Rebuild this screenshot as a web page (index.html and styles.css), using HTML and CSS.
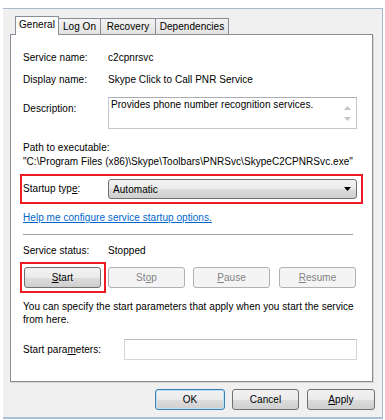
FILE: index.html
```html
<!DOCTYPE html>
<html>
<head>
<meta charset="utf-8">
<link rel="stylesheet" href="styles.css">
</head>
<body>
<div class="window">
  <div class="tabs">
    <div class="tab selected t-general">General</div>
    <div class="tab t-logon">Log On</div>
    <div class="tab t-recovery">Recovery</div>
    <div class="tab t-deps">Dependencies</div>
  </div>
  <div class="panel">
    <div class="row r-name"><span class="label">Service name:</span><span>c2cpnrsvc</span></div>
    <div class="row r-display"><span class="label">Display name:</span><span>Skype Click to Call PNR Service</span></div>
    <div class="row r-desc">
      <span class="label desc-label">Description:</span>
      <div class="textbox">
        <span class="desc-text">Provides phone number recognition services.</span>
        <div class="scroll">
          <svg width="7" height="4" viewBox="0 0 7 4"><path d="M0 4 L3.5 0 L7 4 Z" fill="#c4c4c4"/></svg>
          <svg width="7" height="4" viewBox="0 0 7 4"><path d="M0 0 L3.5 4 L7 0 Z" fill="#c4c4c4"/></svg>
        </div>
      </div>
    </div>
    <div class="path-label">Path to executable:</div>
    <div class="path">"C:\Program Files (x86)\Skype\Toolbars\PNRSvc\SkypeC2CPNRSvc.exe"</div>
    <div class="highlight startup">
      <span class="label">Startup typ<u>e</u>:</span>
      <div class="combo">
        <span>Automatic</span>
        <svg width="7" height="4" viewBox="0 0 7 4"><path d="M0 0 L3.5 4 L7 0 Z" fill="#000"/></svg>
      </div>
    </div>
    <a class="link" href="#">Help me configure service startup options.</a>
    <div class="separator"></div>
    <div class="row r-status"><span class="label">Service status:</span><span>Stopped</span></div>
    <div class="buttons">
      <div class="highlight start-wrap"><button class="btn"><u>S</u>tart</button></div>
      <button class="btn disabled stop">St<u>o</u>p</button>
      <button class="btn disabled pause"><u>P</u>ause</button>
      <button class="btn disabled resume"><u>R</u>esume</button>
    </div>
    <p class="note">You can specify the start parameters that apply when you start the service from here.</p>
    <div class="row r-params"><span class="label params-label">Start para<u>m</u>eters:</span><div class="input"></div></div>
  </div>
  <div class="footer">
    <button class="btn default ok">OK</button>
    <button class="btn cancel">Cancel</button>
    <button class="btn apply"><u>A</u>pply</button>
  </div>
</div>
</body>
</html>
```

FILE: styles.css
```css
* { box-sizing: border-box; }
html, body { margin: 0; padding: 0; background: #ffffff; }
body {
  font-family: "Liberation Sans", Arial, sans-serif;
  font-size: 10px;
  letter-spacing: 0.05px;
  color: #000;
  width: 385px;
  height: 420px;
  overflow: hidden;
}
.window {
  margin: 8px 0 0 3px;
  width: 380px;
  height: 411px;
  background: #f0f0f0;
  border-top: 1px solid #a5b8cd;
  border-right: 1px solid #a5b8cd;
  border-bottom: 2px solid #a9c0da;
  padding: 7px 0 0 7px;
}
.tabs {
  display: flex;
  align-items: flex-end;
  height: 18px;
  margin-left: 5px;
  position: relative;
  z-index: 1;
}
.tab {
  height: 16px;
  line-height: 15px;
  text-align: center;
  border: 1px solid #898c95;
  border-bottom: none;
  margin-right: -1px;
  background: linear-gradient(#f3f3f3, #e3e3e3);
  color: #000;
}
.tab.selected {
  height: 19px;
  margin-bottom: -1px;
  background: #fff;
  line-height: 16px;
  position: relative;
  z-index: 2;
}
.t-general { width: 44px; }
.t-logon { width: 43px; }
.t-recovery { width: 56px; }
.t-deps { width: 74px; }
.panel {
  width: 363px;
  height: 348px;
  border: 1px solid #898c95;
  background: #fff;
  padding: 16px 0 0 12px;
  box-shadow: 1px 1px 0 #d6d6d6;
}
.row {
  display: flex;
  line-height: 14px;
  height: 14px;
}
.label {
  width: 85px;
  flex: none;
}
.r-display { margin-top: 8px; }
.r-desc { margin-top: 10px; height: 32px; }
.desc-label { padding-top: 5px; }
.textbox {
  width: 249px;
  height: 32px;
  border: 1px solid #c5c7cb;
  border-top-color: #abadb3;
  display: flex;
  justify-content: space-between;
  padding: 0 0 0 2px;
}
.desc-text { line-height: 13px; }
.scroll {
  width: 17px;
  display: flex;
  flex-direction: column;
  justify-content: space-around;
  align-items: center;
  padding: 5px 0 4px;
}
.scroll svg { display: block; }
.path-label { margin-top: 12px; line-height: 14px; }
.path { line-height: 14px; white-space: nowrap; }
.highlight {
  border: 2px solid #ed1c24;
}
.startup {
  margin: 5px 0 0 -3px;
  width: 343px;
  height: 30px;
  display: flex;
  align-items: center;
  padding-left: 1px;
}
.startup .label { line-height: 14px; }
.combo {
  width: 249px;
  height: 20px;
  border: 1px solid #707070;
  border-radius: 3px;
  background: linear-gradient(#f2f2f2 0%, #ebebeb 50%, #dddddd 51%, #cfcfcf 100%);
  display: flex;
  align-items: center;
  justify-content: space-between;
  padding: 0 5px 0 4px;
}
.combo svg { display: block; }
.link {
  display: block;
  margin-top: 7px;
  line-height: 14px;
  color: #0066cc;
  text-decoration: underline;
  width: max-content;
}
.separator {
  margin-top: 9px;
  width: 330px;
  height: 1px;
  background: #a0a0a0;
}
.r-status { margin-top: 9px; }
.buttons {
  margin: 4px 0 0 -3px;
  display: flex;
  align-items: center;
}
.start-wrap {
  width: 86px;
  height: 31px;
  padding: 3px 0 0 2px;
}
.btn {
  font-family: inherit;
  font-size: 10px;
  letter-spacing: 0.05px;
  width: 77px;
  height: 21px;
  padding: 0;
  border: 1px solid #707070;
  border-radius: 3px;
  background: linear-gradient(#f2f2f2 0%, #ebebeb 50%, #dddddd 51%, #cfcfcf 100%);
  color: #000;
  display: block;
  line-height: 18px;
}
.btn.disabled {
  border-color: #adb2b5;
  background: #f4f4f4;
  color: #838383;
}
.stop { margin-left: 2px; }
.pause { margin-left: 8px; }
.resume { margin-left: 9px; }
.note {
  margin: 7px 0 0 0;
  line-height: 13px;
  width: 335px;
}
.r-params { margin-top: 13px; height: 21px; align-items: center; }
.params-label { width: 101px; }
.input {
  width: 233px;
  height: 21px;
  border: 1px solid #d5d5d5;
  border-top-color: #c0c0c0;
}
.footer {
  display: flex;
  justify-content: flex-end;
  margin: 7px 7px 0 0;
}
.footer .btn { width: 70px; }
.footer .cancel { width: 67px; margin-left: 7px; }
.footer .apply { width: 68px; margin-left: 8px; }
.btn.default {
  border-color: #3c7fb1;
  box-shadow: inset 0 0 0 1px #b9e3f9;
}
```
